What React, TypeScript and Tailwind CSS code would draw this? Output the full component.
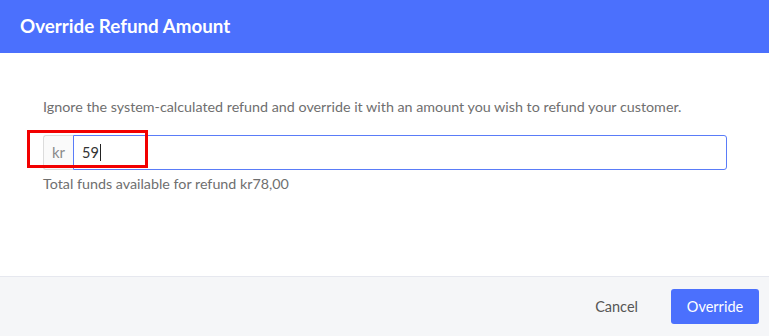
export default function App() {
  return (
    <div className="w-[769px] h-[336px] flex flex-col bg-white font-['Lato','Noto_Sans',sans-serif] overflow-hidden">
      <div className="h-[53px] shrink-0 bg-[#4b70fd] flex items-center px-5">
        <h1 className="text-white text-[18.8px] font-bold">Override Refund Amount</h1>
      </div>
      <div className="flex-1 px-[43px] pt-[44px]">
        <p className="text-[14.3px] text-[#6f6f6f] leading-5">
          Ignore the system-calculated refund and override it with an amount you wish to refund your customer.
        </p>
        <div className="relative mt-[18px] flex w-[684px] h-[35px]">
          <div className="w-[30px] flex items-center justify-center border border-r-0 border-[#dcdcdc] rounded-l-[3px] bg-[#fafafa] text-[15px] text-[#8a8a8a]">
            kr
          </div>
          <div className="flex-1 flex items-center border border-[#5a7cf8] rounded-r-[3px] pl-2 text-[14.5px] text-[#333]">
            59<span className="ml-px w-px h-[17px] bg-[#222]" />
          </div>
          <div className="absolute left-[-16px] top-[-5px] w-[121px] h-[38px] border-[3px] border-[#f20000]" />
        </div>
        <p className="mt-[3px] text-[14.3px] text-[#6f6f6f]">Total funds available for refund kr78,00</p>
      </div>
      <div className="h-[60px] shrink-0 bg-[#f5f6f8] border-t border-[#e6e8ef] flex items-center justify-end pr-[10px] gap-[33px]">
        <button className="text-[14.5px] text-[#555]">Cancel</button>
        <button className="w-[88px] h-[35px] rounded-[3px] bg-[#4b70fd] text-white text-[14.5px]">Override</button>
      </div>
    </div>
  );
}
